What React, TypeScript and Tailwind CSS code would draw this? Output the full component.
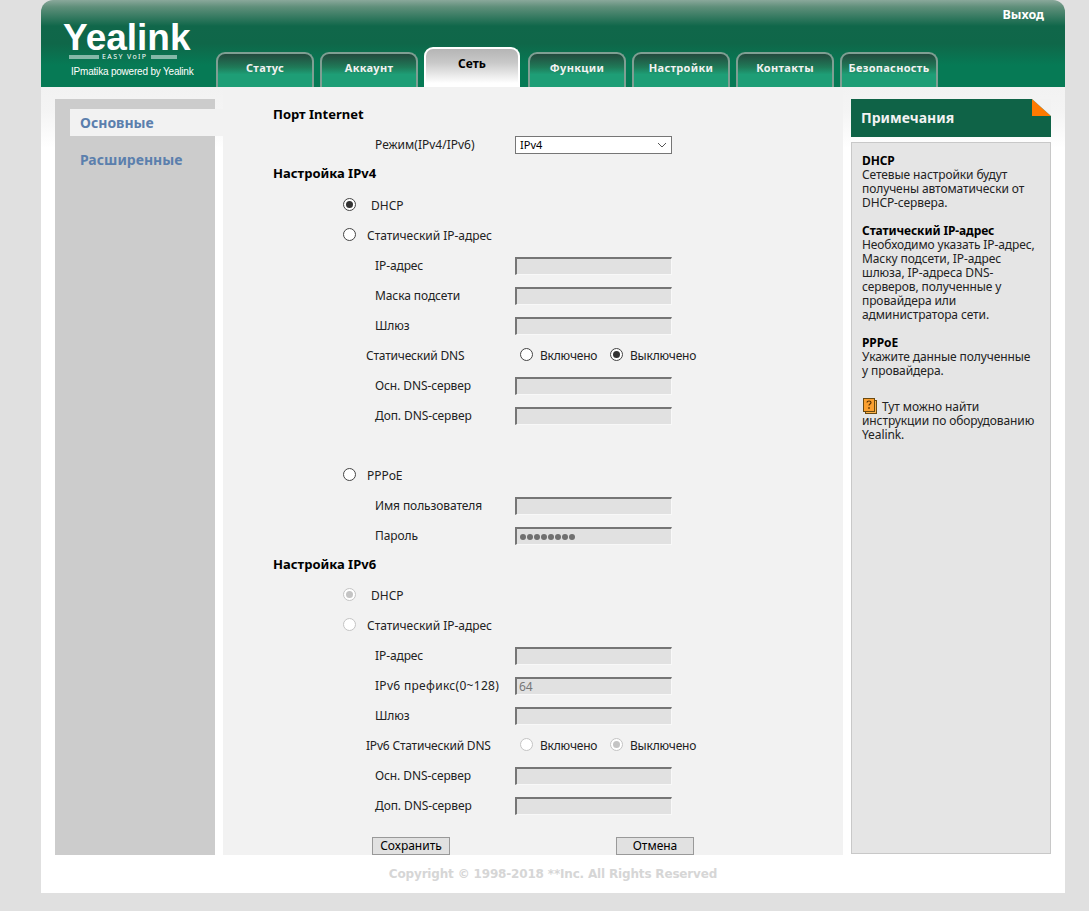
import { ReactNode } from "react";

const tabs = ["Статус", "Аккаунт", "Сеть", "Функции", "Настройки", "Контакты", "Безопасность"];

function Tab({ label }: { label: string }) {
  if (label === "Сеть") {
    return (
      <div className="mr-[2px] flex h-[40px] w-[96px] justify-center rounded-t-[9px] border-x-2 border-t-2 border-white border-b-0 bg-[linear-gradient(180deg,#b5b5b5,#c8c8c8_35%,#ffffff_90%)] pt-[8px] text-[12px] font-bold leading-[14px] text-black">
        {label}
      </div>
    );
  }
  return (
    <div className="flex h-[35px] w-[98px] justify-center rounded-t-[9px] border-x-2 border-t-2 border-[#7f9f93] border-b-0 bg-[linear-gradient(180deg,#23493d,#1f7a58_40%,#1e9e76_62%,#1e9e76)] pt-[6px] text-[11px] font-bold leading-[16px] tracking-[0.3px] text-[#f2f2f2]">
      {label}
    </div>
  );
}

function Radio({ checked, muted }: { checked?: boolean; muted?: boolean }) {
  return (
    <span className={`mb-[3px] flex size-[13px] shrink-0 items-center justify-center rounded-full border bg-white ${muted ? "border-[#c4c4c4]" : "border-[#444]"}`}>
      {checked && <span className={`size-[7px] rounded-full ${muted ? "bg-[#c4c4c4]" : "bg-[#333]"}`} />}
    </span>
  );
}

function Field({ value, dots }: { value?: string; dots?: boolean }) {
  return (
    <div className="flex h-[18px] w-[157px] items-center border-t-2 border-l-2 border-r border-b border-t-[#767676] border-l-[#767676] border-r-[#f8f8f8] border-b-[#f8f8f8] bg-[#e1e1e1] pl-[2px] text-[12px] text-[#777777]">
      {dots ? (
        <span className="flex gap-[1px] pl-[1px]">
          {[0, 1, 2, 3, 4, 5, 6, 7].map((d) => (
            <span key={d} className="size-[6px] rounded-full bg-[#707070]" />
          ))}
        </span>
      ) : (
        value
      )}
    </div>
  );
}

function Row({ children, className = "" }: { children: ReactNode; className?: string }) {
  return <div className={`flex h-[30px] items-center ${className}`}>{children}</div>;
}

function FieldRow({ label, value, dots, wide }: { label: string; value?: string; dots?: boolean; wide?: boolean }) {
  return (
    <Row>
      <span className={`w-[140px] ${wide ? "tracking-[0.3px]" : "tracking-[-0.1px]"}`}>{label}</span>
      <Field value={value} dots={dots} />
    </Row>
  );
}

function RadioRow({ label, checked, muted, dhcp }: { label: string; checked?: boolean; muted?: boolean; dhcp?: boolean }) {
  return (
    <Row className="ml-[-32px]">
      <Radio checked={checked} muted={muted} />
      <span className={dhcp ? "ml-[15px]" : "ml-[11px] tracking-[-0.05px]"}>{label}</span>
    </Row>
  );
}

function DnsRow({ label, muted }: { label: string; muted?: boolean }) {
  return (
    <Row className="ml-[-9px] tracking-[-0.2px]">
      <span className="w-[154px]">{label}</span>
      <Radio muted={muted} />
      <span className="ml-[7px] w-[70px]">Включено</span>
      <Radio checked muted={muted} />
      <span className="ml-[7px]">Выключено</span>
    </Row>
  );
}

function Heading({ children }: { children: ReactNode }) {
  return <h2 className="text-[13px] font-bold leading-[16px] text-black">{children}</h2>;
}

function Note({ title, children }: { title: string; children: ReactNode }) {
  return (
    <div className="mb-[14px]">
      <b className="block text-[12px] font-bold text-black">{title}</b>
      {children}
    </div>
  );
}

export default function App() {
  return (
    <div className="min-h-[911px] bg-[#e0e0e0] pl-[41px] font-['Noto_Sans','DejaVu_Sans',sans-serif] text-[12px] text-[#222]">
      <div className="w-[1024px]">
        <header className="relative flex h-[87px] items-end rounded-t-[12px] bg-[linear-gradient(180deg,#8aa89b_0%,#5f8f7a_8%,#10674a_30%,#0f6749_50%,#067a55_75%,#067a55_100%)] pl-[175px]">
          <div className="absolute left-[22px] top-[22px] text-white">
            <div className="font-['Liberation_Sans',sans-serif] text-[37px] font-bold leading-[31px]">Yealink</div>
            <div className="flex items-center gap-[3px] pl-[6px] text-[7px] leading-[8px] tracking-[1.4px]">
              <span className="h-[4px] w-[30px] bg-white/50" />
              EASY VoIP
              <span className="h-[4px] w-[26px] bg-white/50" />
            </div>
            <div className="mt-[4px] pl-[8px] font-['Liberation_Sans',sans-serif] text-[10px] leading-[14px] tracking-[-0.2px]">IPmatika powered by Yealink</div>
          </div>
          <div className="absolute right-[21px] top-[6px] text-[12.5px] font-bold text-white">Выход</div>
          <nav className="flex items-end gap-[6px]">
            {tabs.map((t) => (
              <Tab key={t} label={t} />
            ))}
          </nav>
        </header>

        <main className="flex h-[768px] bg-[linear-gradient(180deg,#f2f2f2,#f4f4f4_3%,#ffffff_8%)] pl-[14px] pt-[12px]">
          <aside className="relative h-[756px] w-[160px] bg-[#cccccc] pt-[10px]">
            <div className="ml-[15px] flex h-[27px] w-[153px] items-center bg-[#f2f2f2] pl-[10px] text-[14px] font-bold text-[#5b7fad]">Основные</div>
            <div className="ml-[25px] mt-[10px] text-[14px] font-bold leading-[27px] text-[#5b7fad]">Расширенные</div>
          </aside>

          <section className="-mt-[12px] ml-[8px] h-[768px] w-[620px] bg-[#f2f2f2] pl-[50px] pt-[19px]">
            <Heading>Порт Internet</Heading>
            <div className="ml-[102px] mt-[8px] flex h-[30px] items-center">
              <span className="w-[140px]">Режим(IPv4/IPv6)</span>
              <div className="flex h-[18px] w-[157px] items-center justify-between border border-[#767676] bg-white pl-[4px] pr-[4px] text-[11px] text-black">
                IPv4
                <svg width="10" height="6" viewBox="0 0 10 6" fill="none" stroke="#555"><path d="M1 1l4 4 4-4" /></svg>
              </div>
            </div>
            <div className="mb-[10px] mt-[5px]"><Heading>Настройка IPv4</Heading></div>
            <div className="ml-[102px]">
              <RadioRow label="DHCP" checked dhcp />
              <RadioRow label="Статический IP-адрес" />
              <FieldRow label="IP-адрес" />
              <FieldRow label="Маска подсети" />
              <FieldRow label="Шлюз" />
              <DnsRow label="Статический DNS" />
              <FieldRow label="Осн. DNS-сервер" />
              <FieldRow label="Доп. DNS-сервер" />
              <div className="h-[30px]" />
              <RadioRow label="PPPoE" />
              <FieldRow label="Имя пользователя" />
              <FieldRow label="Пароль" dots />
            </div>
            <div className="mb-[9px] mt-[5px]"><Heading>Настройка IPv6</Heading></div>
            <div className="ml-[102px]">
              <RadioRow label="DHCP" checked muted dhcp />
              <RadioRow label="Статический IP-адрес" muted />
              <FieldRow label="IP-адрес" />
              <FieldRow label="IPv6 префикс(0~128)" value="64" wide />
              <FieldRow label="Шлюз" />
              <DnsRow label="IPv6 Статический DNS" muted />
              <FieldRow label="Осн. DNS-сервер" />
              <FieldRow label="Доп. DNS-сервер" />
            </div>
            <div className="ml-[99px] mt-[16px] flex gap-[166px]">
              <button className="h-[18px] w-[78px] border border-[#999] bg-[#e1e1e1] leading-[16px] text-black">Сохранить</button>
              <button className="h-[18px] w-[78px] border border-[#999] bg-[#e1e1e1] leading-[16px] text-black">Отмена</button>
            </div>
          </section>

          <aside className="ml-[8px] w-[200px]">
            <div className="relative flex h-[38px] items-center bg-[#0f6347] pb-[1px] pl-[10px] text-[14px] font-bold text-[#f2f2f2]">
              Примечания
              <svg className="absolute right-0 top-0" width="19" height="18" viewBox="0 0 19 18">
                <path d="M0 0L19 17H0Z" fill="#ff7a00" />
                <path d="M0 0L19 17V0Z" fill="#f2f2f2" />
              </svg>
            </div>
            <div className="mt-[5px] h-[712px] border border-[#c8c8c8] bg-[#e5e5e5] px-[10px] pt-[11px] text-[12px] leading-[14px] tracking-[-0.1px]">
              <Note title="DHCP">Сетевые настройки будут получены автоматически от DHCP-сервера.</Note>
              <Note title="Статический IP-адрес">Необходимо указать IP-адрес, Маску подсети, IP-адрес шлюза, IP-адреса DNS-серверов, полученные у провайдера или администратора сети.</Note>
              <Note title="PPPoE">Укажите данные полученные<br />у провайдера.</Note>
              <div className="mt-[20px]">
                <svg className="mr-[4px] inline-block align-[-3px]" width="16" height="16" viewBox="0 0 16 16">
                  <rect x="3.5" y="2.5" width="11" height="13" fill="#f9b04a" stroke="#6b4a10" />
                  <rect x="1.5" y="0.5" width="11" height="13" fill="#fba030" stroke="#6b4a10" />
                  <path d="M5 4.5c0-2 4-2 4 0 0 1.5-2 1.5-2 3M7 9v2" fill="none" stroke="#5a3000" strokeWidth="1.2" />
                </svg>
                Тут можно найти инструкции по оборудованию Yealink.
              </div>
            </div>
          </aside>
        </main>

        <footer className="flex h-[38px] items-center justify-center bg-white font-['DejaVu_Sans',sans-serif] text-[12px] font-bold tracking-[-0.17px] text-[#d6d6d6]">
          Copyright © 1998-2018 **Inc. All Rights Reserved
        </footer>
      </div>
    </div>
  );
}
